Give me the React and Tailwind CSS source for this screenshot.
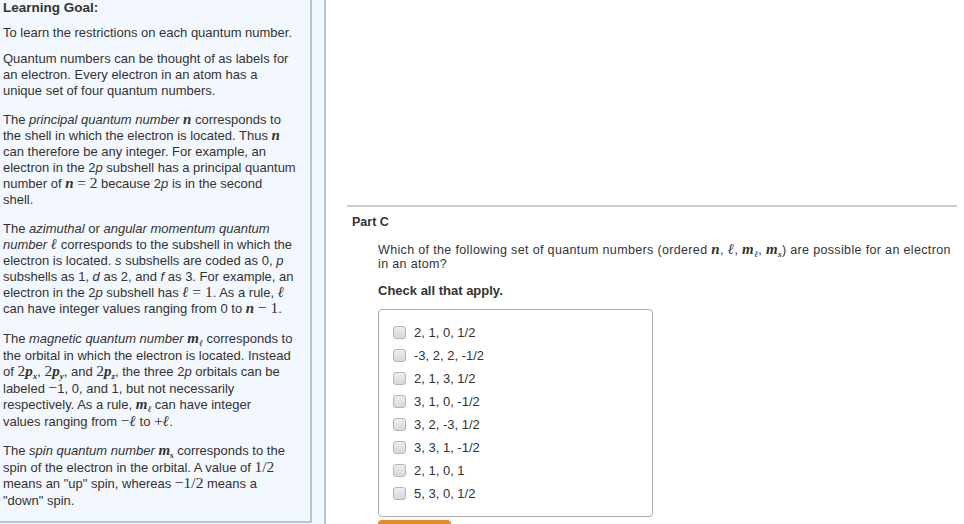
import React from 'react'

const M = ({ children }) => (
  <span className="font-['Liberation_Serif','DejaVu_Serif',serif] italic font-bold text-[15px] leading-[10px] align-baseline">{children}</span>
)
const R = ({ children }) => (
  <span className="font-['Liberation_Serif','DejaVu_Serif',serif] not-italic text-[15.5px] leading-[10px] align-baseline">{children}</span>
)
const Sub = ({ children }) => (
  <span className="relative top-[3px] font-['Liberation_Serif','DejaVu_Serif',serif] italic font-bold text-[9px] leading-[8px] align-baseline">{children}</span>
)

const options = [
  '2, 1, 0, 1/2',
  '-3, 2, 2, -1/2',
  '2, 1, 3, 1/2',
  '3, 1, 0, -1/2',
  '3, 2, -3, 1/2',
  '3, 3, 1, -1/2',
  '2, 1, 0, 1',
  '5, 3, 0, 1/2',
]

function LearningGoal() {
  return (
    <div className="w-[326px] h-[524px] shrink-0 bg-[#f3f8fe] border-r-2 border-[#b6c6d7] overflow-hidden">
      <div className="w-[312px] h-[523px] border-r-2 border-b-2 border-[#b6c6d7] pl-[3px] text-[13px] leading-[16px] text-[#333] whitespace-nowrap">
        <div className="font-bold text-[13.5px] leading-[16px]">Learning Goal:</div>
        <p className="mt-[9px]">To learn the restrictions on each quantum number.</p>
        <p className="mt-[10px]">
          Quantum numbers can be thought of as labels for<br />
          an electron. Every electron in an atom has a<br />
          unique set of four quantum numbers.
        </p>
        <p className="mt-[13px]">
          The <i>principal quantum number</i> <M>n</M> corresponds to<br />
          the shell in which the electron is located. Thus <M>n</M><br />
          can therefore be any integer. For example, an<br />
          electron in the 2<i>p</i> subshell has a principal quantum<br />
          number of <M>n</M> <R>= 2</R> because 2<i>p</i> is in the second<br />
          shell.
        </p>
        <p className="mt-[13px]">
          The <i>azimuthal</i> or <i>angular momentum quantum</i><br />
          <i>number</i> <M>ℓ</M> corresponds to the subshell in which the<br />
          electron is located. <i>s</i> subshells are coded as 0, <i>p</i><br />
          subshells as 1, <i>d</i> as 2, and <i>f</i> as 3. For example, an<br />
          electron in the 2<i>p</i> subshell has <M>ℓ</M> <R>= 1</R>. As a rule, <M>ℓ</M><br />
          can have integer values ranging from 0 to <M>n</M> <R>− 1</R>.
        </p>
        <p className="mt-[14px] leading-[16.5px]">
          The <i>magnetic quantum number</i> <M>m</M><Sub>ℓ</Sub> corresponds to<br />
          the orbital in which the electron is located. Instead<br />
          of <R>2</R><M>p</M><Sub>x</Sub>, <R>2</R><M>p</M><Sub>y</Sub>, and <R>2</R><M>p</M><Sub>z</Sub>, the three 2<i>p</i> orbitals can be<br />
          labeled <R>−</R>1, 0, and 1, but not necessarily<br />
          respectively. As a rule, <M>m</M><Sub>ℓ</Sub> can have integer<br />
          values ranging from <R>−</R><M>ℓ</M> to <R>+</R><M>ℓ</M>.
        </p>
        <p className="mt-[13px] leading-[16.5px]">
          The <i>spin quantum number</i> <M>m</M><Sub>s</Sub> corresponds to the<br />
          spin of the electron in the orbital. A value of <R>1/2</R><br />
          means an "up" spin, whereas <R>−1/2</R> means a<br />
          "down" spin.
        </p>
      </div>
    </div>
  )
}

export default function App() {
  return (
    <div className="w-[964px] h-[524px] overflow-hidden flex bg-white font-['Liberation_Sans',Arial,sans-serif] text-[#333]">
      <LearningGoal />
      <div className="flex-1 pl-[21px] pr-[7px] pt-[205px]">
        <div className="h-[2px] bg-[#cccccc]" />
        <div className="font-bold text-[12.5px] leading-[16px] mt-[7px] pl-[5px]">Part C</div>
        <div className="pl-[31px] mt-[13px]">
          <p className="text-[12.5px] tracking-[0.35px] leading-[14px] whitespace-nowrap">
            Which of the following set of quantum numbers (ordered <M>n</M>, <M>ℓ</M>, <M>m</M><Sub>ℓ</Sub>, <M>m</M><Sub>s</Sub>) are possible for an electron<br />
            in an atom?
          </p>
          <p className="font-bold text-[13px] leading-[16px] mt-[12px]">Check all that apply.</p>
          <div className="w-[275px] mt-[10px] border border-[#aaaaaa] rounded-[4px] pt-[11px] pb-[11px] pl-[14px]">
            {options.map((o) => (
              <label key={o} className="flex items-center h-[23px] text-[13px]">
                <span className="w-[13px] h-[13px] rounded-[3px] border border-[#b5b5b5] bg-gradient-to-b from-[#eeeeee] to-[#d8d8d8] mr-[8px]" />
                <span>{o}</span>
              </label>
            ))}
          </div>
          <div className="w-[73px] h-[10px] mt-[3px] rounded-t-[4px] bg-[#e9892a]" />
        </div>
      </div>
    </div>
  )
}
